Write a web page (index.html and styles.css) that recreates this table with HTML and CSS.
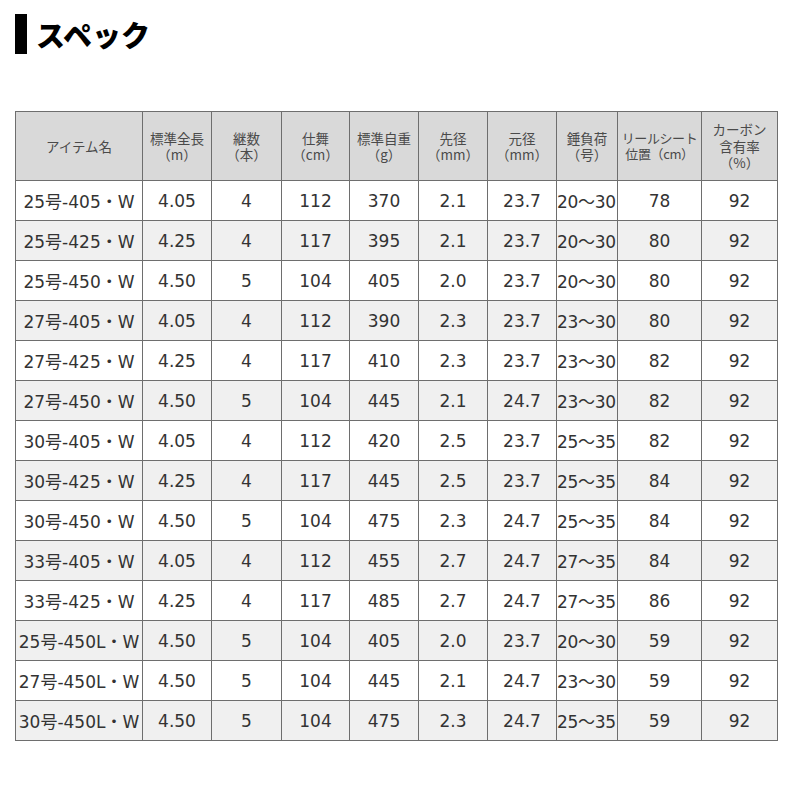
FILE: index.html
```html
<!DOCTYPE html>
<html lang="ja">
<head>
<meta charset="utf-8">
<link rel="stylesheet" href="styles.css">
</head>
<body>
<h2 class="title"><span class="bar"></span><span class="title-text">スペック</span></h2>
<table class="spec">
<colgroup>
<col style="width:127px"><col style="width:69px"><col style="width:70px"><col style="width:68px"><col style="width:69px"><col style="width:69px"><col style="width:69px"><col style="width:61px"><col style="width:84px"><col style="width:76px">
</colgroup>
<thead>
<tr>
<th>アイテム名</th>
<th><span class="ln">標準全長</span><span class="ln">（m）</span></th>
<th><span class="ln">継数</span><span class="ln">（本）</span></th>
<th><span class="ln">仕舞</span><span class="ln">（cm）</span></th>
<th><span class="ln">標準自重</span><span class="ln">（g）</span></th>
<th><span class="ln">先径</span><span class="ln">（mm）</span></th>
<th><span class="ln">元径</span><span class="ln">（mm）</span></th>
<th><span class="ln">錘負荷</span><span class="ln">（号）</span></th>
<th class="reel"><span class="ln">リールシート</span><span class="ln">位置（cm）</span></th>
<th><span class="ln">カーボン</span><span class="ln">含有率</span><span class="ln">（%）</span></th>
</tr>
</thead>
<tbody>
<tr><td>25号-405・W</td><td>4.05</td><td>4</td><td>112</td><td>370</td><td>2.1</td><td>23.7</td><td class="tight">20～30</td><td>78</td><td>92</td></tr>
<tr><td>25号-425・W</td><td>4.25</td><td>4</td><td>117</td><td>395</td><td>2.1</td><td>23.7</td><td class="tight">20～30</td><td>80</td><td>92</td></tr>
<tr><td>25号-450・W</td><td>4.50</td><td>5</td><td>104</td><td>405</td><td>2.0</td><td>23.7</td><td class="tight">20～30</td><td>80</td><td>92</td></tr>
<tr><td>27号-405・W</td><td>4.05</td><td>4</td><td>112</td><td>390</td><td>2.3</td><td>23.7</td><td class="tight">23～30</td><td>80</td><td>92</td></tr>
<tr><td>27号-425・W</td><td>4.25</td><td>4</td><td>117</td><td>410</td><td>2.3</td><td>23.7</td><td class="tight">23～30</td><td>82</td><td>92</td></tr>
<tr><td>27号-450・W</td><td>4.50</td><td>5</td><td>104</td><td>445</td><td>2.1</td><td>24.7</td><td class="tight">23～30</td><td>82</td><td>92</td></tr>
<tr><td>30号-405・W</td><td>4.05</td><td>4</td><td>112</td><td>420</td><td>2.5</td><td>23.7</td><td class="tight">25～35</td><td>82</td><td>92</td></tr>
<tr><td>30号-425・W</td><td>4.25</td><td>4</td><td>117</td><td>445</td><td>2.5</td><td>23.7</td><td class="tight">25～35</td><td>84</td><td>92</td></tr>
<tr><td>30号-450・W</td><td>4.50</td><td>5</td><td>104</td><td>475</td><td>2.3</td><td>24.7</td><td class="tight">25～35</td><td>84</td><td>92</td></tr>
<tr><td>33号-405・W</td><td>4.05</td><td>4</td><td>112</td><td>455</td><td>2.7</td><td>24.7</td><td class="tight">27～35</td><td>84</td><td>92</td></tr>
<tr><td>33号-425・W</td><td>4.25</td><td>4</td><td>117</td><td>485</td><td>2.7</td><td>24.7</td><td class="tight">27～35</td><td>86</td><td>92</td></tr>
<tr><td>25号-450L・W</td><td>4.50</td><td>5</td><td>104</td><td>405</td><td>2.0</td><td>23.7</td><td class="tight">20～30</td><td>59</td><td>92</td></tr>
<tr><td>27号-450L・W</td><td>4.50</td><td>5</td><td>104</td><td>445</td><td>2.1</td><td>24.7</td><td class="tight">23～30</td><td>59</td><td>92</td></tr>
<tr><td>30号-450L・W</td><td>4.50</td><td>5</td><td>104</td><td>475</td><td>2.3</td><td>24.7</td><td class="tight">25～35</td><td>59</td><td>92</td></tr>
</tbody>
</table>
</body>
</html>
```

FILE: styles.css
```css
html, body {
  margin: 0;
  padding: 0;
  background: #fff;
}
body {
  font-family: "DejaVu Sans", "Noto Sans CJK JP", sans-serif;
  color: #333;
}
.title {
  display: flex;
  align-items: center;
  gap: 9px;
  margin: 0;
  padding: 14px 0 0 15px;
  height: 40px;
}
.bar {
  display: block;
  width: 12px;
  height: 40px;
  background: #000;
}
.title-text {
  font-family: "Noto Sans CJK JP", sans-serif;
  font-weight: 900;
  font-size: 29px;
  color: #000;
  line-height: 40px;
}
.spec {
  margin: 57px 0 0 15px;
  border-collapse: collapse;
  table-layout: fixed;
  width: 763px;
}
.spec th, .spec td {
  border: 1px solid #6e6e6e;
  text-align: center;
  padding: 0;
  overflow: visible;
  white-space: nowrap;
}
.spec th {
  background: #d9d9d9;
  font-family: "Noto Sans CJK JP", sans-serif;
  font-weight: 400;
  font-size: 13.5px;
  line-height: 16.5px;
  color: #4a4a4a;
  height: 68px;
}
.spec th .ln {
  display: block;
  height: 16.5px;
  line-height: 16.5px;
}
.spec th.reel {
  font-size: 13px;
  letter-spacing: -0.4px;
}
.spec td {
  font-size: 17px;
  height: 39px;
  color: #333;
}
.spec td.tight {
  letter-spacing: -0.3px;
  text-align: left;
}
.spec tbody tr:nth-child(even) td {
  background: #f0f0f0;
}
.spec tbody tr:nth-child(odd) td {
  background: #fff;
}
```
